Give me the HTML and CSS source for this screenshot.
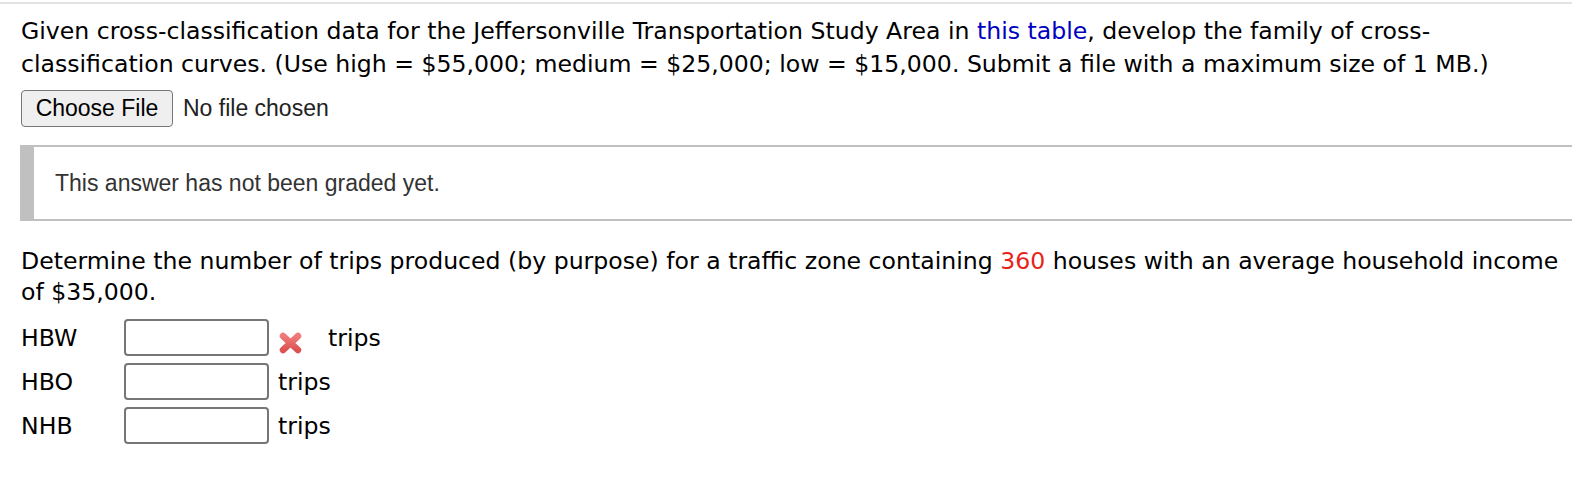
FILE: index.html
```html
<!DOCTYPE html>
<html>
<head>
<meta charset="utf-8">
<link rel="stylesheet" href="styles.css">
</head>
<body>
<div class="page">
  <p class="q">Given cross-classification data for the Jeffersonville Transportation Study Area in <a class="link" href="#">this table</a>, develop the family of cross-classification curves. (Use high = $55,000; medium = $25,000; low = $15,000. Submit a file with a maximum size of 1 MB.)</p>
  <div class="file-row">
    <button class="file-btn">Choose File</button>
    <span class="file-none">No file chosen</span>
  </div>
  <div class="graded">This answer has not been graded yet.</div>
  <p class="q q2">Determine the number of trips produced (by purpose) for a traffic zone containing <span class="red">360</span> houses with an average household income of $35,000.</p>
  <div class="rows">
    <div class="row">
      <span class="lbl">HBW</span>
      <span class="inp"></span>
      <svg class="xmark" width="25" height="22" viewBox="0 0 25 22"><defs><linearGradient id="g" x1="0" y1="0" x2="0" y2="1"><stop offset="0" stop-color="#f07a7a"/><stop offset="1" stop-color="#dc5252"/></linearGradient></defs><path d="M5 4 L20 18 M20 4 L5 18" stroke="url(#g)" stroke-width="6.5" stroke-linecap="round"/></svg>
      <span class="unit unit-x">trips</span>
    </div>
    <div class="row">
      <span class="lbl">HBO</span>
      <span class="inp"></span>
      <span class="unit">trips</span>
    </div>
    <div class="row">
      <span class="lbl">NHB</span>
      <span class="inp"></span>
      <span class="unit">trips</span>
    </div>
  </div>
</div>
</body>
</html>
```
FILE: styles.css
```css
html, body { margin: 0; padding: 0; background: #fff; }
.page {
  margin-top: 2px;
  border-top: 2px solid #e3e3e3;
  font-family: "DejaVu Sans", Verdana, sans-serif;
  font-size: 23.6px;
  color: #000;
}
.q {
  margin: 0;
  padding: 11px 0 0 21px;
  line-height: 33px;
}
.link { color: #0000c0; text-decoration: none; }
.red { color: #e8231b; }
.file-row {
  display: flex;
  align-items: center;
  margin-top: 9px;
  padding-left: 21px;
  height: 37px;
}
.file-btn {
  box-sizing: border-box;
  width: 152px;
  height: 37px;
  border: 1px solid #767676;
  border-radius: 4px;
  background: #efefef;
  font-family: "Liberation Sans", Arial, sans-serif;
  font-size: 23px;
  color: #000;
  padding: 0;
}
.file-none {
  font-family: "Liberation Sans", Arial, sans-serif;
  font-size: 23px;
  color: #222;
  margin-left: 10px;
}
.graded {
  margin: 18px 0 0 20px;
  height: 72px;
  border-top: 2px solid #c0c0c0;
  border-bottom: 2px solid #c0c0c0;
  border-left: 14px solid #c0c0c0;
  display: flex;
  align-items: center;
  padding-left: 21px;
  font-family: "Liberation Sans", Arial, sans-serif;
  font-size: 23px;
  color: #333;
}
.q2 { padding-top: 25px; line-height: 31px; }
.rows {
  margin-top: 11px;
  padding-left: 21px;
  display: flex;
  flex-direction: column;
  gap: 7px;
}
.row {
  display: flex;
  align-items: center;
  height: 37px;
}
.lbl { width: 103px; }
.inp {
  box-sizing: border-box;
  width: 145px;
  height: 37px;
  border: 2px solid #767676;
  border-radius: 4px;
  background: #fff;
}
.xmark { margin-left: 9px; margin-top: 11px; }
.unit { margin-left: 9px; }
.unit-x { margin-left: 25px; }
```
